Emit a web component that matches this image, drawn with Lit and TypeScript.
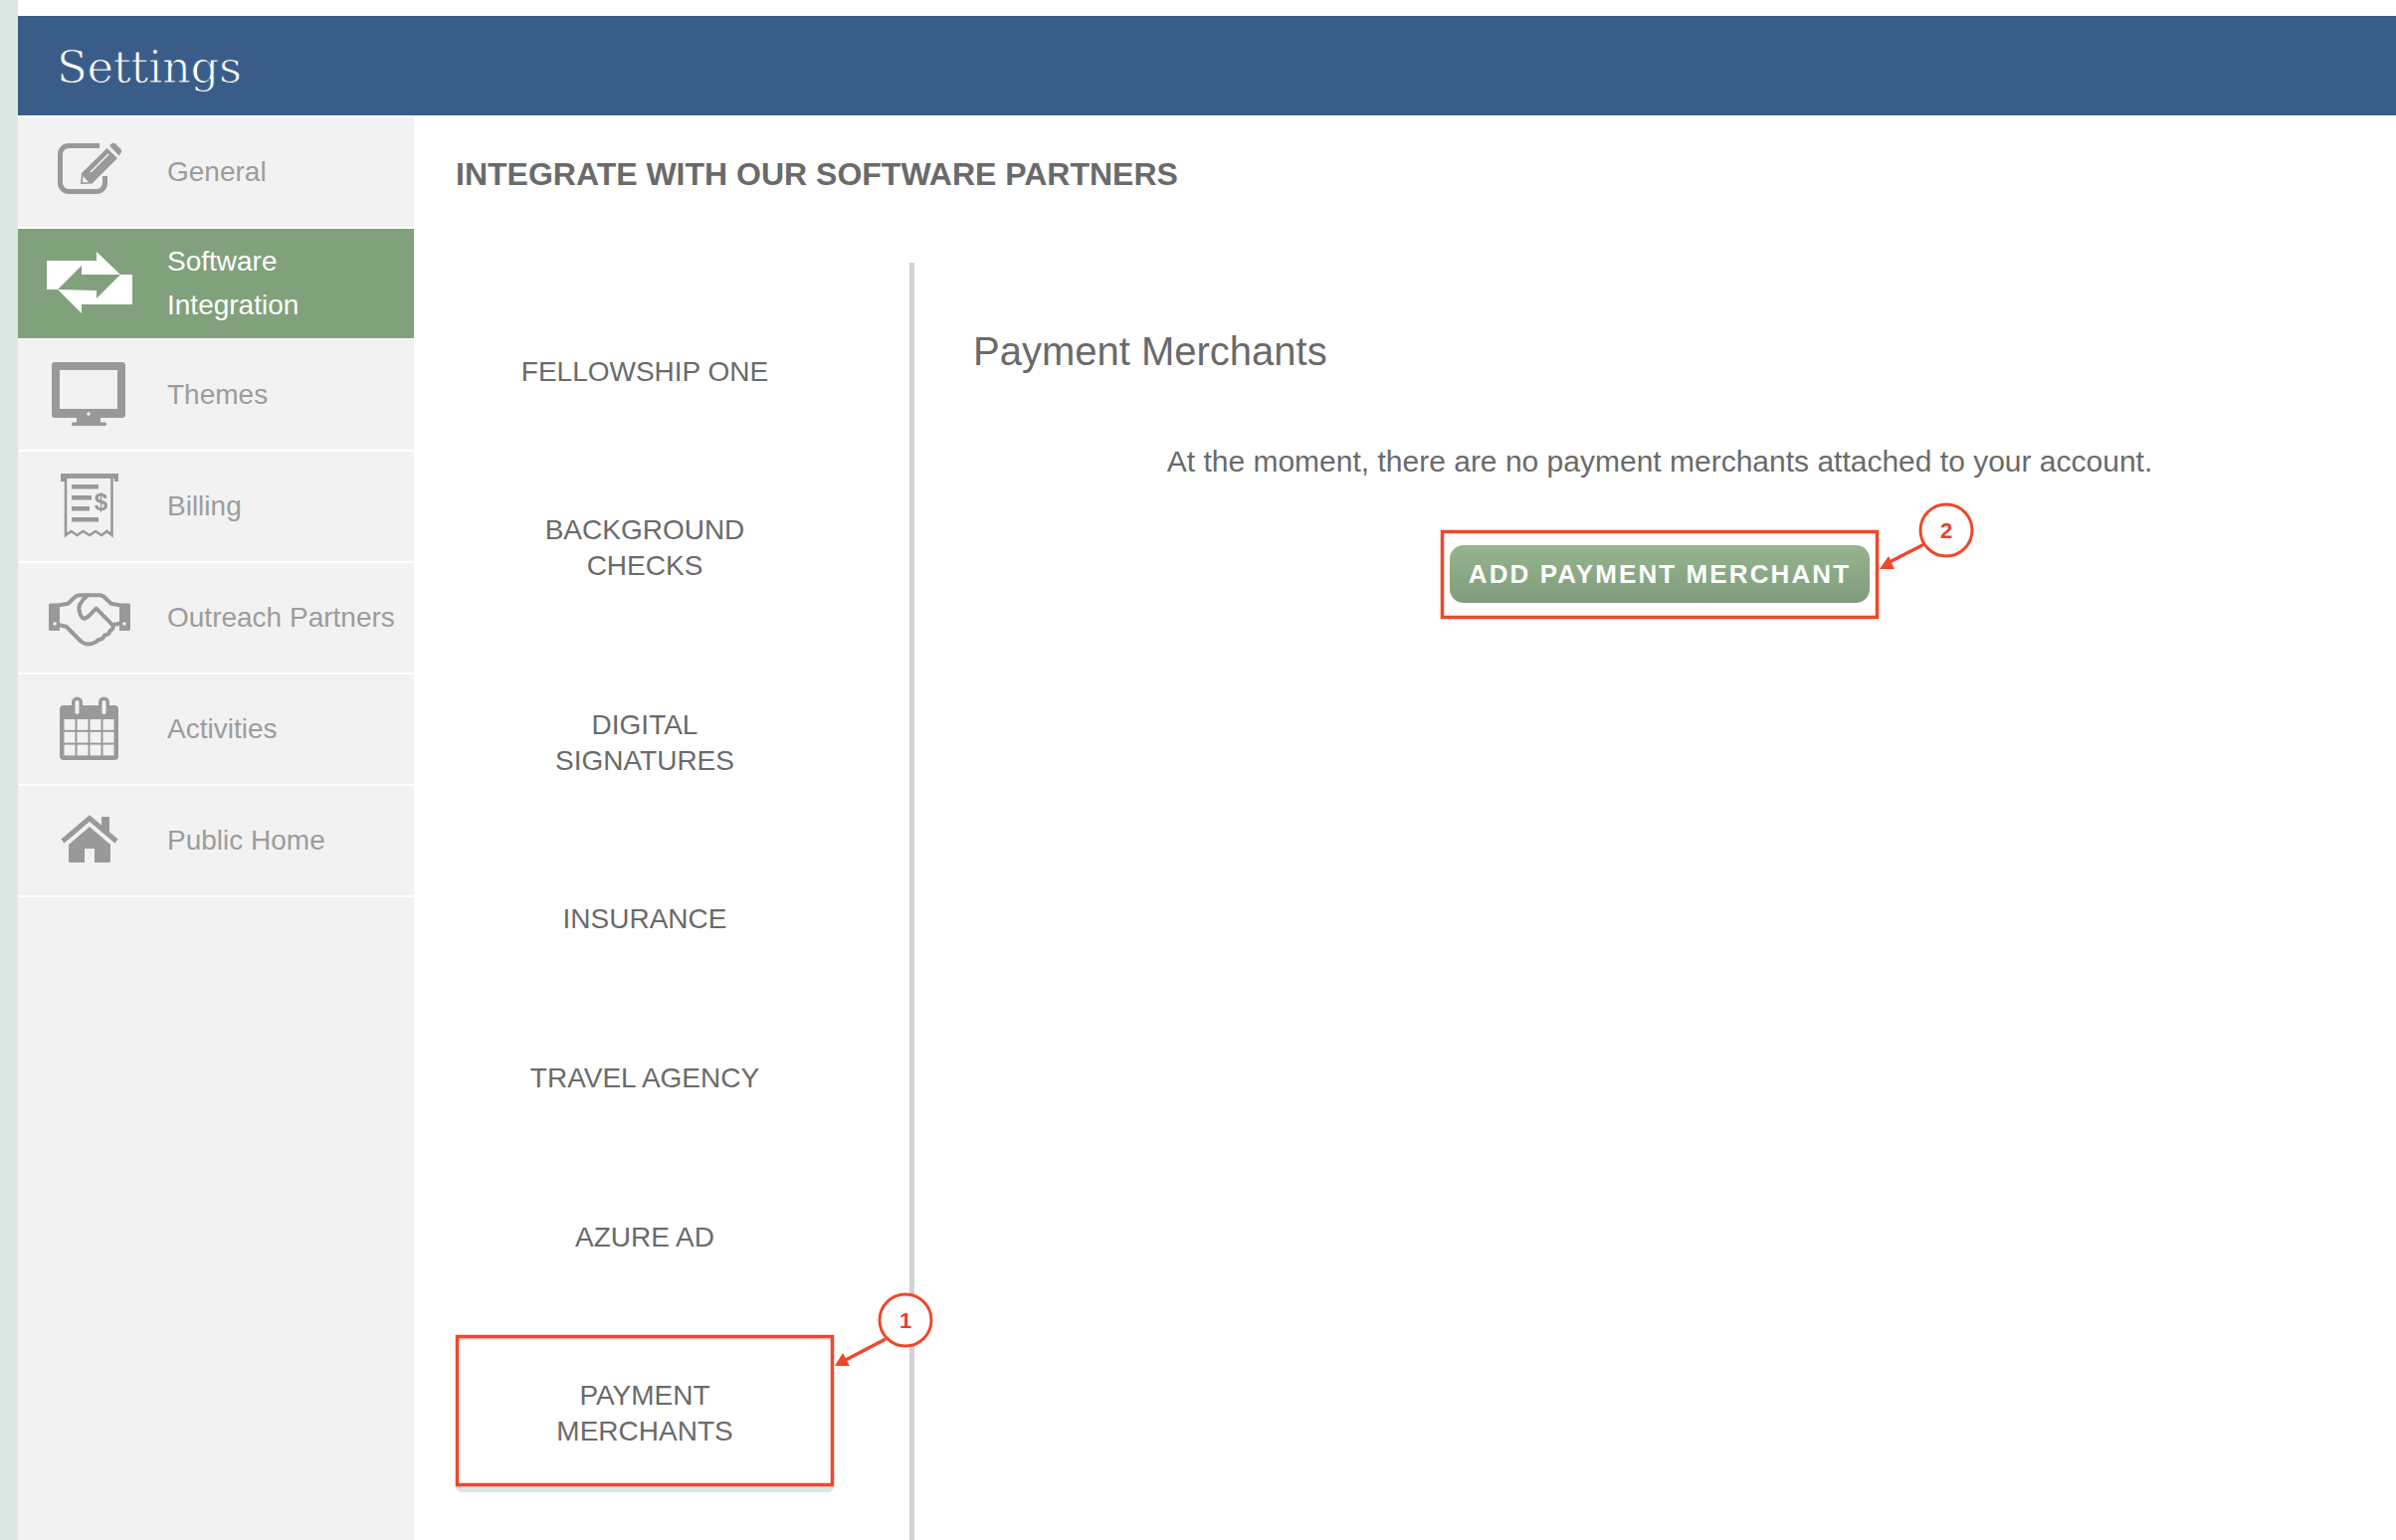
import { LitElement, html, css, svg } from "lit";
import { customElement } from "lit/decorators.js";

const G = "#999999";

const gridCells = () => {
  const out = [];
  for (let r = 0; r < 3; r++) for (let c = 0; c < 4; c++) {
    out.push(svg`<rect x=${25.5 + c * 13} y=${40 + r * 12.8} width="11" height="10.8" fill="#f2f2f2"/>`);
  }
  return out;
};

const icons = {
  general: svg`
    <path d="M61 23.5H30a8.5 8.5 0 0 0-8.5 8.5V61a8.5 8.5 0 0 0 8.5 8.5H58a8.5 8.5 0 0 0 8.5-8.5V54" fill="none" stroke="${G}" stroke-width="5"/>
    <path d="M42 62 L43 51 L68.5 26 L79 36 L53.5 61.5 Z" fill="${G}"/>
    <path d="M71 23.5 L73 21.5 Q75 20 77 21.5 L82.5 27 Q84 29 82.5 31 L80.5 33.5 Z" fill="${G}"/>
    <path d="M52 50 L70 32" stroke="#f2f2f2" stroke-width="1.6"/>
    <path d="M44.5 54 L50 60 L44 60.5 Z" fill="#f2f2f2"/>`,
  software: svg`
    <polygon points="8,27 58,27 58,18 82,41 43,41 43,32 19,56 8,56" fill="#fff"/>
    <polygon points="19,56 58,57 58,65 82,41 94,41 94,71 43,71 43,80" fill="#fff"/>`,
  themes: svg`
    <path fill-rule="evenodd" d="M16 17H84a3 3 0 0 1 3 3V70a3 3 0 0 1-3 3H16a3 3 0 0 1-3-3V20a3 3 0 0 1 3-3ZM21 25V64H79V25Z" fill="${G}"/>
    <circle cx="50" cy="69" r="1.8" fill="#f2f2f2"/>
    <rect x="38" y="73" width="24" height="5" fill="${G}"/>
    <rect x="33" y="77.5" width="35" height="3.5" rx="1.5" fill="${G}"/>`,
  billing: svg`
    <polygon points="22,17 80,17 80,25 76,25 76,22 26,22 26,25 22,25" fill="${G}"/>
    <path d="M27 20V79l5.500-4 6 4 6-4 6.500 4 6-4 6 4 5.500-4 5 4V20" fill="none" stroke="${G}" stroke-width="2.600"/>
    <rect x="33" y="28" width="27" height="4.500" fill="${G}"/>
    <rect x="33" y="39" width="20" height="4.500" fill="${G}"/>
    <rect x="33" y="50" width="18" height="4.500" fill="${G}"/>
    <rect x="33" y="61" width="27" height="4.500" fill="${G}"/>
    <text x="62.500" y="54" text-anchor="middle" class="dollar">$</text>`,
  outreach: svg`
    <path d="M10 37a1.500 1.500 0 0 1 1.500-1.500H21V63H11.500A1.500 1.500 0 0 1 10 61.500Z" fill="${G}"/>
    <path d="M92 37a1.500 1.500 0 0 0-1.500-1.500H81V63h9.500a1.500 1.500 0 0 0 1.500-1.500Z" fill="${G}"/>
    <circle cx="16" cy="56" r="1.800" fill="#f2f2f2"/>
    <circle cx="86" cy="56" r="1.800" fill="#f2f2f2"/>
    <g fill="none" stroke="${G}" stroke-width="4" stroke-linejoin="round" stroke-linecap="round">
      <path d="M21 37.300 L29.300 35.700 L37 28.500 Q39 27.300 43 27.300 H60 Q63 27.300 65 28.500 L72.700 35.700 L81 37.300"/>
      <path d="M21 57.300 L27.700 59 L42.700 74 Q49.300 79 57.700 74 L60 72 Q65 71.500 66 67.500 Q71 67 71.500 63 Q76 61 74.300 57.300 L81 55.700"/>
      <path d="M49.300 27.300 Q44 31 41 37 Q39.500 41 41.500 46 Q43 51 46 50.700 Q49 50 52.700 45.700 L57.700 40.700 L74.300 57.300"/>
    </g>`,
  activities: svg`
    <path fill-rule="evenodd" d="M33 26V23a5.500 5.500 0 0 1 5.500-5.500h0A5.500 5.500 0 0 1 44 23V26H60V23a5.500 5.500 0 0 1 5.500-5.500h0A5.500 5.500 0 0 1 71 23V26H76a4 4 0 0 1 4 4V77a4 4 0 0 1-4 4H25a4 4 0 0 1-4-4V30a4 4 0 0 1 4-4Z" fill="${G}"/>
    <rect x="36.500" y="21" width="4" height="14" rx="2" fill="#f2f2f2"/>
    <rect x="63.500" y="21" width="4" height="14" rx="2" fill="#f2f2f2"/>
    ${gridCells()}`,
  home: svg`
    <polyline points="24,50.500 51,27.500 78,50.500" fill="none" stroke="${G}" stroke-width="5"/>
    <rect x="63" y="26" width="8" height="16" fill="${G}"/>
    <path d="M51 36 L72 54 V70.500 A1.500 1.500 0 0 1 70.500 72 H56 V58 H46 V72 H31.500 A1.500 1.500 0 0 1 30 70.500 V54 Z" fill="${G}"/>`,
};

const navItems = [
  { label: "General", icon: icons.general },
  { label: "Software Integration", icon: icons.software, active: true },
  { label: "Themes", icon: icons.themes },
  { label: "Billing", icon: icons.billing },
  { label: "Outreach Partners", icon: icons.outreach },
  { label: "Activities", icon: icons.activities },
  { label: "Public Home", icon: icons.home },
];

const tabs = [
  ["FELLOWSHIP ONE"],
  ["BACKGROUND", "CHECKS"],
  ["DIGITAL", "SIGNATURES"],
  ["INSURANCE"],
  ["TRAVEL AGENCY"],
  ["AZURE AD"],
  ["PAYMENT", "MERCHANTS"],
];

@customElement("app-root")
export class AppRoot extends LitElement {
  static styles = css`
    :host {
      display: block;
      position: relative;
      width: 2408px;
      height: 1548px;
      overflow: hidden;
      background: #fff;
      font-family: "Liberation Sans", Arial, sans-serif;
      color: #6a6a6a;
    }
    .page { display: flex; height: 100%; }
    .band { width: 18px; flex: none; background: #dce6e3; }
    .shell { flex: 1; min-width: 0; display: flex; flex-direction: column; padding-top: 16px; }
    .header {
      height: 100px;
      flex: none;
      box-sizing: border-box;
      padding: 2px 0 0 39px;
      background: #3a5c88;
      color: #fff;
      display: flex;
      align-items: center;
      font-family: "DejaVu Serif", serif;
      font-size: 45px;
      letter-spacing: -0.4px;
      -webkit-text-stroke: 1px #3a5c88;
    }
    .body { flex: 1; min-height: 0; display: flex; padding-top: 2px; }
    .side { width: 398px; flex: none; display: flex; flex-direction: column; gap: 2px; }
    .nav {
      height: 110px;
      flex: none;
      background: #f2f2f2;
      display: flex;
      align-items: center;
      color: #9c9c9c;
      font-size: 28px;
      line-height: 44px;
    }
    .nav.active { background: #80a17b; color: #fff; }
    .nav.filler { flex: 1; height: auto; }
    .ico { width: 150px; flex: none; padding-left: 21px; box-sizing: border-box; }
    .ico svg { display: block; width: 100px; height: 100px; overflow: visible; }
    .nav-label { width: 200px; }
    .nav.wide .nav-label { width: auto; white-space: nowrap; }
    .dollar { font: bold 24px "Liberation Sans", sans-serif; fill: #999; }
    .main { flex: 1; min-width: 0; display: flex; flex-direction: column; padding-left: 42px; }
    h1 {
      margin: 0;
      height: 146px;
      flex: none;
      padding-top: 37px;
      box-sizing: border-box;
      font-size: 32px;
      line-height: 40px;
      font-weight: bold;
      color: #6a6a6a;
    }
    .cols { flex: 1; min-height: 0; display: flex; }
    .tabs {
      width: 380px;
      flex: none;
      display: flex;
      flex-direction: column;
      gap: 43.6px;
      padding-top: 51.6px;
      margin-right: 76px;
    }
    .tab {
      padding: 40px 0;
      text-align: center;
      font-size: 28px;
      line-height: 36px;
      color: #6a6a6a;
      box-sizing: border-box;
    }
    .tab.sel {
      margin-top: -1px;
      padding: 38px 0 37px;
      border: 3px solid #dce6e3;
      border-bottom-width: 6px;
      border-radius: 6px;
    }
    .tab div { white-space: nowrap; }
    .content {
      flex: 1;
      min-width: 0;
      border-left: 5px solid #d2d2d2;
      padding: 0 50px 0 59px;
      display: flex;
      flex-direction: column;
    }
    h2 {
      margin: 64px 0 0;
      font-size: 40px;
      line-height: 50px;
      font-weight: normal;
      color: #6a6a6a;
    }
    .msg {
      margin: 64px 0 0;
      text-align: center;
      font-size: 30px;
      line-height: 44px;
      color: #6a6a6a;
    }
    .btn-row { display: flex; justify-content: center; margin-top: 62px; }
    button {
      width: 422px;
      height: 58px;
      border: none;
      border-radius: 14px;
      padding: 0;
      background: linear-gradient(#96b48e, #7f9d7b);
      color: #fff;
      font: bold 26px "Liberation Sans", sans-serif;
      letter-spacing: 2.1px;
      white-space: nowrap;
    }
    .notes { position: absolute; inset: 0; width: 2408px; height: 1548px; pointer-events: none; }
    .num { font: bold 22px "Liberation Sans", sans-serif; fill: #e8402a; text-anchor: middle; }
  `;

  render() {
    return html`
      <div class="page">
        <div class="band"></div>
        <div class="shell">
          <div class="header">Settings</div>
          <div class="body">
            <nav class="side">
              ${navItems.map(
                (n) => html`<div class="nav ${n.active ? "active" : ""} ${n.label === "Outreach Partners" ? "wide" : ""}">
                  <div class="ico"><svg viewBox="0 0 100 100">${n.icon}</svg></div>
                  <div class="nav-label">${n.label}</div>
                </div>`
              )}
              <div class="nav filler"></div>
            </nav>
            <div class="main">
              <h1>INTEGRATE WITH OUR SOFTWARE PARTNERS</h1>
              <div class="cols">
                <div class="tabs">
                  ${tabs.map(
                    (t, i) => html`<div class="tab ${i === tabs.length - 1 ? "sel" : ""}">
                      ${t.map((l) => html`<div>${l}</div>`)}
                    </div>`
                  )}
                </div>
                <div class="content">
                  <h2>Payment Merchants</h2>
                  <p class="msg">At the moment, there are no payment merchants attached to your account.</p>
                  <div class="btn-row"><button>ADD PAYMENT MERCHANT</button></div>
                </div>
              </div>
            </div>
          </div>
        </div>
      </div>
      <svg class="notes" viewBox="0 0 2408 1548">
        <g fill="none" stroke="#f0472a">
          <rect x="459.500" y="1343.500" width="377" height="149" stroke-width="3.500"/>
          <rect x="1449.500" y="534.500" width="437" height="86" stroke-width="3.500"/>
          <circle cx="910" cy="1327" r="26" stroke-width="3" fill="#fff"/>
          <circle cx="1956" cy="533" r="26" stroke-width="3" fill="#fff"/>
          <path d="M890 1346L850 1367" stroke-width="3.500"/>
          <path d="M1934 547L1895 567" stroke-width="3.500"/>
        </g>
        <polygon points="839,1373 847,1360 854,1373" fill="#f0472a"/>
        <polygon points="1889,572 1898,559 1904,572" fill="#f0472a"/>
        <text x="910" y="1335" class="num">1</text>
        <text x="1956" y="541" class="num">2</text>
      </svg>
    `;
  }
}
